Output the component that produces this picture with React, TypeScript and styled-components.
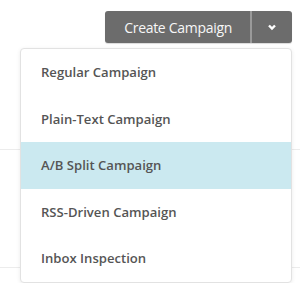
import React, { useState } from "react";
import styled, { createGlobalStyle } from "styled-components";

const GlobalStyle = createGlobalStyle`
    html, body {
        margin: 0;
        padding: 0;
        background: #ffffff;
        font-family: "Open Sans", "Liberation Sans", sans-serif;
    }
`;

const Page = styled.div`
    position: relative;
    width: 300px;
    height: 283px;
    overflow: hidden;
`;

const Toolbar = styled.div`
    display: flex;
    justify-content: flex-end;
    padding: 11px 8px 0 0;
`;

const SplitButton = styled.div`
    display: flex;
    height: 32px;
    border-radius: 3px;
    overflow: hidden;
    background: #6c6c6c;
    box-shadow: 0 1px 1px rgba(0, 0, 0, 0.15);
`;

const MainButton = styled.button`
    border: 0;
    margin: 0;
    padding: 0 18px 0 19px;
    background: transparent;
    color: #f7f7f7;
    font-family: "Open Sans", "Liberation Sans", sans-serif;
    font-size: 14px;
    font-weight: 500;
    letter-spacing: -0.3px;
`;

const Divider = styled.span`
    width: 2px;
    background: #9a9a9a;
`;

const CaretButton = styled.button`
    display: flex;
    align-items: center;
    justify-content: center;
    width: 40px;
    border: 0;
    margin: 0;
    padding: 0;
    background: transparent;
    color: #ffffff;
`;

const Rows = styled.div`
    display: flex;
    flex-direction: column;
`;

const RowLine = styled.div<{ $top: number }>`
    margin-top: ${(p) => p.$top}px;
    height: 1px;
    background: #ececec;
`;

const Menu = styled.ul`
    position: absolute;
    top: 48px;
    left: 20px;
    right: 8px;
    margin: 0;
    padding: 0;
    list-style: none;
    background: #ffffff;
    border: 1px solid #e2e2e2;
    border-radius: 4px;
    box-shadow: 0 1px 4px rgba(0, 0, 0, 0.08);
    overflow: hidden;
`;

const MenuItem = styled.li<{ $active?: boolean }>`
    display: flex;
    align-items: center;
    height: 46.5px;
    padding-left: 20px;
    background: ${(p) => (p.$active ? "#cbe9f0" : "transparent")};
    color: #555555;
    font-size: 13.1px;
    font-weight: 600;
    cursor: pointer;
`;

const items = [
    "Regular Campaign",
    "Plain-Text Campaign",
    "A/B Split Campaign",
    "RSS-Driven Campaign",
    "Inbox Inspection",
];

export default function App() {
    const [hover] = useState(2);

    return (
        <Page>
            <GlobalStyle />
            <Toolbar>
                <SplitButton>
                    <MainButton>Create Campaign</MainButton>
                    <Divider />
                    <CaretButton>
                        <svg width="10" height="7" viewBox="0 0 10 7">
                            <path d="M2 1.5 L5 4.5 L8 1.5" fill="none" stroke="#fff" strokeWidth="2.4" />
                        </svg>
                    </CaretButton>
                </SplitButton>
            </Toolbar>
            <Rows>
                <RowLine $top={106} />
                <RowLine $top={117} />
            </Rows>
            <Menu>
                {items.map((label, i) => (
                    <MenuItem key={label} $active={i === hover}>
                        {label}
                    </MenuItem>
                ))}
            </Menu>
        </Page>
    );
}
